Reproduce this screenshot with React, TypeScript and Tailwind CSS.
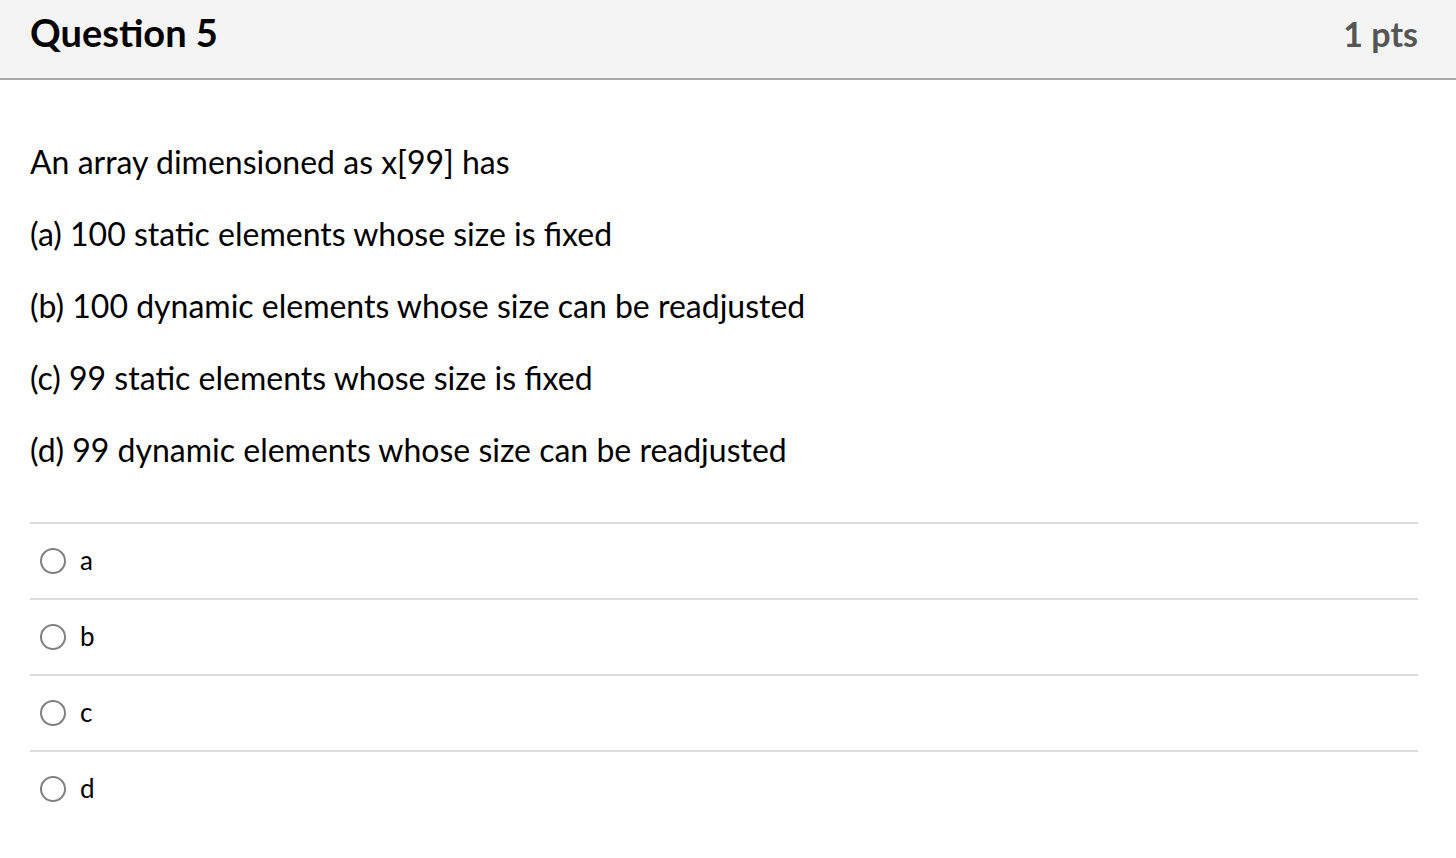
const choices = ["a", "b", "c", "d"];

const lines = [
  "An array dimensioned as x[99] has",
  "(a) 100 static elements whose size is fixed",
  "(b) 100 dynamic elements whose size can be readjusted",
  "(c) 99 static elements whose size is fixed",
  "(d) 99 dynamic elements whose size can be readjusted",
];

export default function App() {
  return (
    <div className="min-h-screen bg-white text-black font-['Lato','Liberation_Sans',sans-serif]">
      {/* Header */}
      <div className="h-[80px] bg-[#f4f4f4] border-b-2 border-[#a9a9a9] pl-[30px] pr-[38px] pt-[9px] flex items-baseline justify-between">
        <h2 className="text-[38px] leading-[46px] font-bold text-black">Question 5</h2>
        <span className="text-[34px] leading-[46px] font-bold text-[#555555]">1 pts</span>
      </div>

      {/* Body */}
      <div className="pl-[30px] pr-[38px] pt-[63px]">
        <div className="flex flex-col gap-[34px]">
          {lines.map((line) => (
            <p key={line} className="text-[32px] leading-[38px]">
              {line}
            </p>
          ))}
        </div>

        <div className="mt-[53px]">
          {choices.map((c) => (
            <label
              key={c}
              className="h-[76px] border-t-2 border-[#dcdcdc] flex items-center gap-[14px] pl-[10px]"
            >
              <span className="w-[26px] h-[26px] rounded-full border-2 border-[#808080] bg-white shrink-0" />
              <span className="text-[26px] leading-none -mt-[2px]">{c}</span>
            </label>
          ))}
        </div>
      </div>
    </div>
  );
}
